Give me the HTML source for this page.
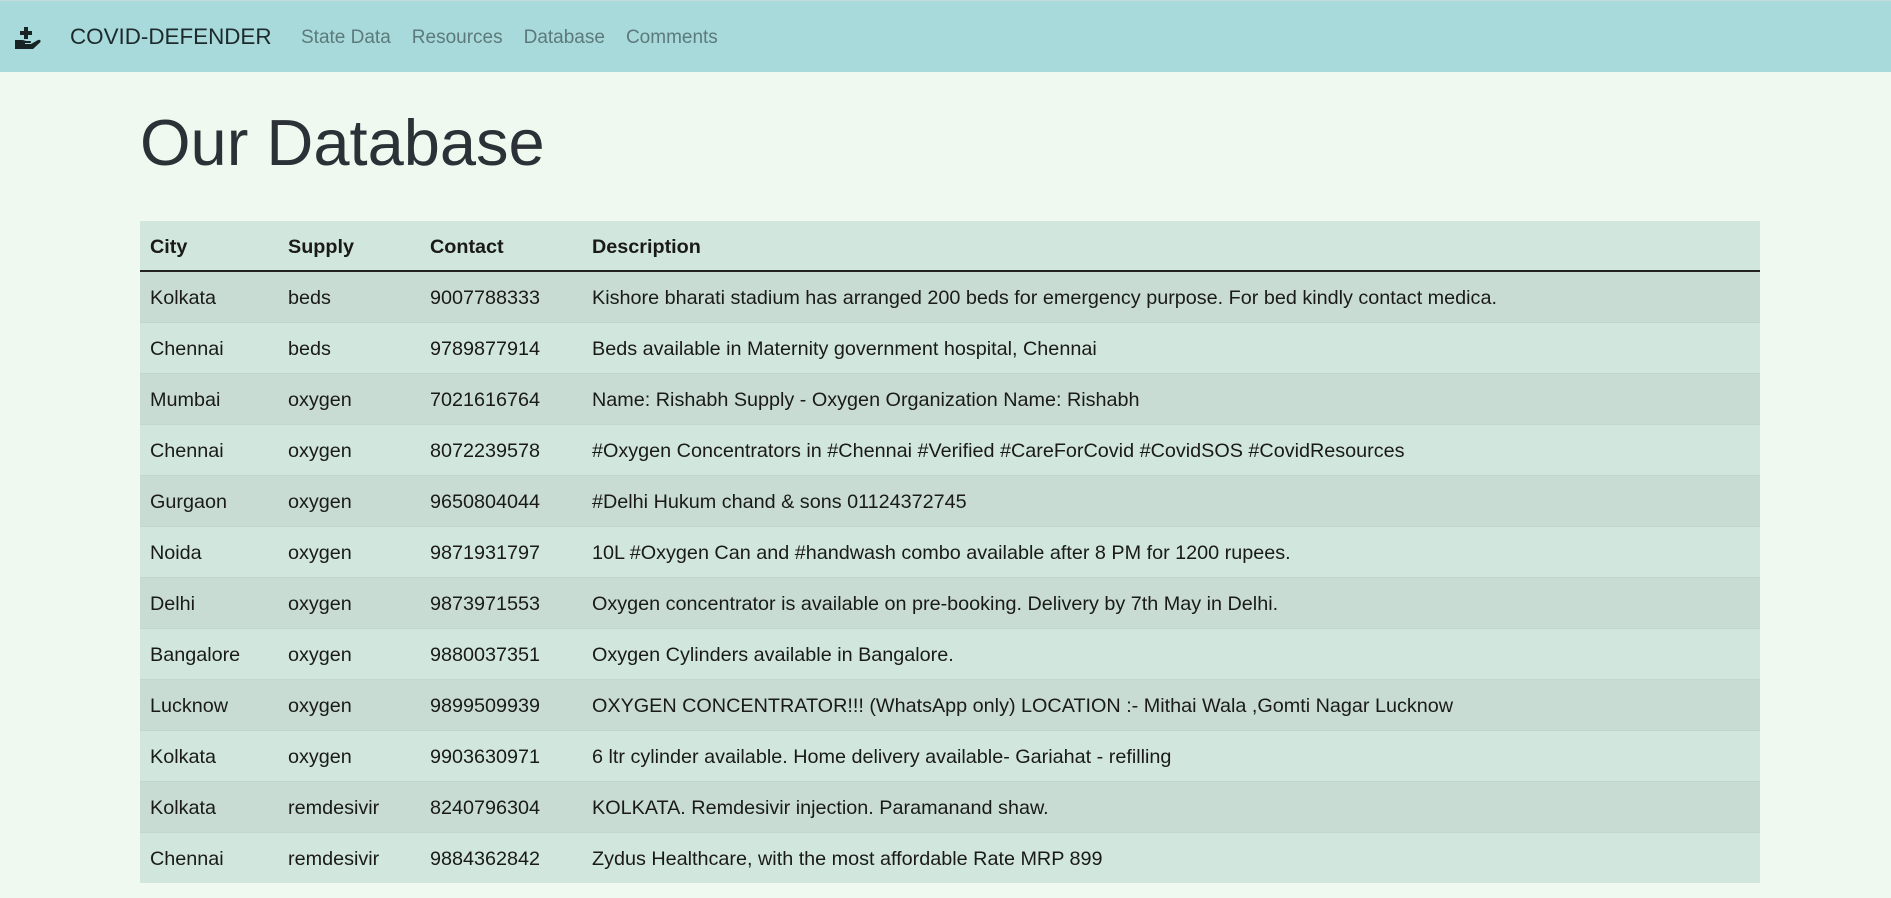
<!DOCTYPE html>
<html><head><meta charset="utf-8"><style>
*{margin:0;padding:0;box-sizing:border-box}
body{width:1891px;height:898px;overflow:hidden;background:#f0f9ef;font-family:"Liberation Sans",sans-serif;color:#212529}
.nav{height:72px;background:#a8dadc;border-top:1px solid #c9d8dc;position:relative}
.brand{position:absolute;left:70px;top:23px;font-size:22.4px;color:#1d2a2b}
.links{position:absolute;left:301px;top:26px;font-size:19px;color:#5c7a7c}
.links span{margin-right:21px}
h1{position:absolute;left:140px;top:105px;font-size:65px;font-weight:normal;color:#2b3136;}
table{position:absolute;left:140px;top:221px;width:1620px;border-collapse:collapse;font-size:19.8px;color:#1a1a1a}
th{text-align:left;font-weight:bold;height:50px;background:#d1e6dd;border-bottom:2px solid #222;padding:4px 10px 0}
td{height:51px;padding:4px 10px 0;border-top:1px solid #c2d6cc}
tr:nth-child(odd) td{background:#c8dcd3}
tr:nth-child(even) td{background:#d1e6dd}
</style></head><body>
<div class="nav">
<svg style="position:absolute;left:14px;top:25px" width="32" height="26" viewBox="0 0 32 26">
<path d="M10 1h4v4h4v4h-4v4h-4V9H6V5h4z" fill="#1a2324"/>
<path d="M1 14h7c2 0 3 1 5 1h3c1.5 0 1.5 2 0 2h-5v1h6l7-4c2-1 3.5 1 2 2.5L19 23H1z" fill="#1a2324"/>
</svg>
<div class="brand">COVID-DEFENDER</div>
<div class="links"><span>State Data</span><span>Resources</span><span>Database</span><span>Comments</span></div>
</div>
<h1>Our Database</h1>
<table>
<colgroup><col style="width:138px"><col style="width:142px"><col style="width:162px"><col></colgroup>
<thead><tr><th>City</th><th>Supply</th><th>Contact</th><th>Description</th></tr></thead>
<tbody>
<tr><td>Kolkata</td><td>beds</td><td>9007788333</td><td>Kishore bharati stadium has arranged 200 beds for emergency purpose. For bed kindly contact medica.</td></tr>
<tr><td>Chennai</td><td>beds</td><td>9789877914</td><td>Beds available in Maternity government hospital, Chennai</td></tr>
<tr><td>Mumbai</td><td>oxygen</td><td>7021616764</td><td>Name: Rishabh Supply - Oxygen Organization Name: Rishabh</td></tr>
<tr><td>Chennai</td><td>oxygen</td><td>8072239578</td><td>#Oxygen Concentrators in #Chennai #Verified #CareForCovid #CovidSOS #CovidResources</td></tr>
<tr><td>Gurgaon</td><td>oxygen</td><td>9650804044</td><td>#Delhi Hukum chand &amp; sons 01124372745</td></tr>
<tr><td>Noida</td><td>oxygen</td><td>9871931797</td><td>10L #Oxygen Can and #handwash combo available after 8 PM for 1200 rupees.</td></tr>
<tr><td>Delhi</td><td>oxygen</td><td>9873971553</td><td>Oxygen concentrator is available on pre-booking. Delivery by 7th May in Delhi.</td></tr>
<tr><td>Bangalore</td><td>oxygen</td><td>9880037351</td><td>Oxygen Cylinders available in Bangalore.</td></tr>
<tr><td>Lucknow</td><td>oxygen</td><td>9899509939</td><td>OXYGEN CONCENTRATOR!!! (WhatsApp only) LOCATION :- Mithai Wala ,Gomti Nagar Lucknow</td></tr>
<tr><td>Kolkata</td><td>oxygen</td><td>9903630971</td><td>6 ltr cylinder available. Home delivery available- Gariahat - refilling</td></tr>
<tr><td>Kolkata</td><td>remdesivir</td><td>8240796304</td><td>KOLKATA. Remdesivir injection. Paramanand shaw.</td></tr>
<tr><td>Chennai</td><td>remdesivir</td><td>9884362842</td><td>Zydus Healthcare, with the most affordable Rate MRP 899</td></tr>
</tbody></table>
</body></html>
